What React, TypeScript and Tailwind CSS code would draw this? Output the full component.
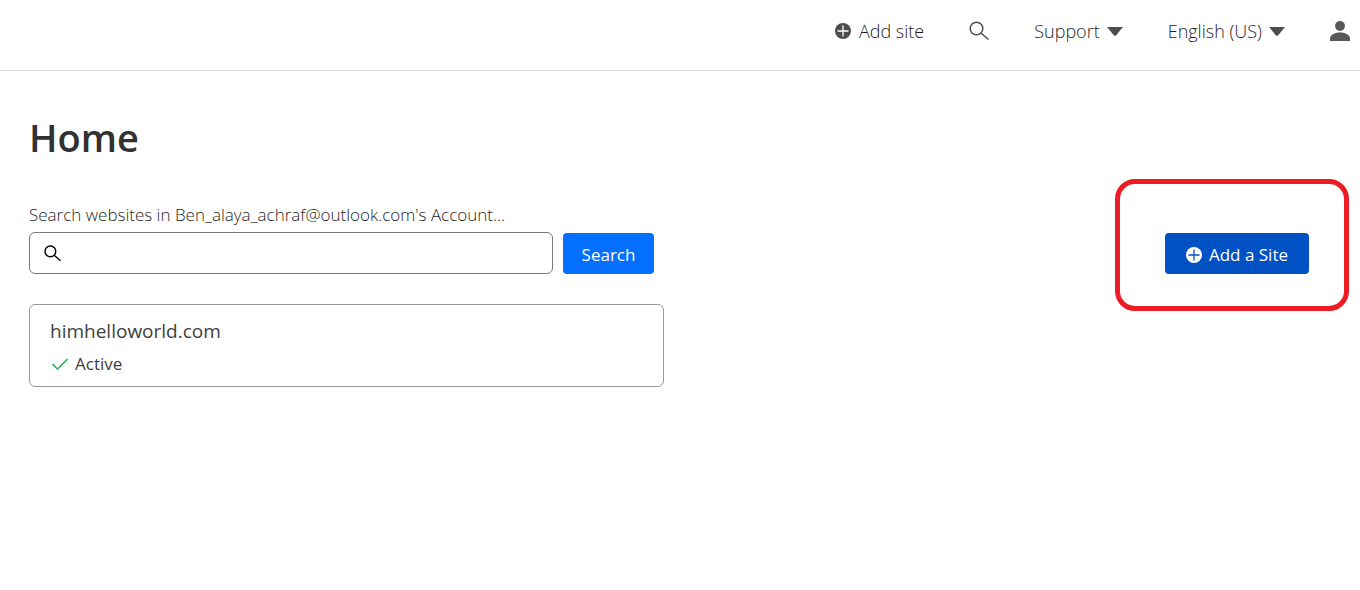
import React, { useState } from "react";

interface Site {
  name: string;
  status: string;
}

const sites: Site[] = [{ name: "himhelloworld.com", status: "Active" }];

const PlusCircle = ({ plus }: { plus: string }) => (
  <svg className="h-4 w-4 shrink-0" viewBox="0 0 16 16" aria-hidden="true">
    <circle cx="8" cy="8" r="8" fill="currentColor" />
    <path d="M8 2.5v11M2.5 8h11" stroke={plus} strokeWidth="1.3" />
  </svg>
);

const SearchIcon = ({ className }: { className: string }) => (
  <svg
    className={className}
    viewBox="0 0 20 20"
    fill="none"
    stroke="currentColor"
    aria-hidden="true"
  >
    <circle cx="7.5" cy="7.5" r="6.3" />
    <path d="M12 12l7.5 6.5" />
  </svg>
);

const Caret = () => (
  <svg
    className="h-[9px] w-4 shrink-0 text-[#4d4d4d]"
    viewBox="0 0 16 9"
    aria-hidden="true"
  >
    <path d="M0 0h16L9 8.4q-1 .9-2 0z" fill="currentColor" />
  </svg>
);

const Header: React.FC = () => (
  <header className="flex h-[71px] items-start justify-end gap-[45px] border-b border-[#d9d9d9] pt-[17px] pr-[10px] text-[18px] font-light text-[#1f1f1f]">
    <a href="#add" className="flex h-7 items-center gap-2">
      <span className="flex text-[#4d4d4d]">
        <PlusCircle plus="#fff" />
      </span>
      Add site
    </a>
    <button type="button" aria-label="Search" className="flex h-7 items-center">
      <SearchIcon className="h-5 w-5 stroke-[1.5] text-[#4d4d4d]" />
    </button>
    <button type="button" className="flex h-7 items-center gap-[7px]">
      Support
      <Caret />
    </button>
    <button type="button" className="flex h-7 items-center gap-[7px]">
      English (US)
      <Caret />
    </button>
    <button type="button" aria-label="Account" className="flex h-7 items-center">
      <svg className="h-5 w-5 text-[#595959]" viewBox="0 0 20 20" fill="currentColor">
        <circle cx="10" cy="5" r="5" />
        <path d="M0 20v-2c0-4 4-6.5 10-6.5S20 14 20 18v2z" />
      </svg>
    </button>
  </header>
);

const App: React.FC = () => {
  const [query, setQuery] = useState("");

  return (
    <div className="min-h-screen bg-white font-['Open_Sans','Noto_Sans',sans-serif] text-[17px] leading-7 text-[#404040]">
      <Header />
      <main className="pt-[41px] pr-[51px] pb-8 pl-[29px]">
        <h1 className="text-[38px] leading-[50px] font-semibold text-[#313131]">
          Home
        </h1>
        <div className="mt-[39px] flex items-end justify-between">
          <form onSubmit={(e) => e.preventDefault()}>
            <label
              htmlFor="site-search"
              className="block font-light text-[#1f1f1f]"
            >
              Search websites in Ben_alaya_achraf@outlook.com's Account...
            </label>
            <div className="mt-[3px] flex items-end gap-[10px]">
              <div className="flex h-[42px] w-[524px] items-center gap-2 rounded-md border border-[#797979] px-[14px]">
                <SearchIcon className="h-[17px] w-[17px] shrink-0 stroke-[1.7] text-black" />
                <input
                  id="site-search"
                  type="text"
                  value={query}
                  onChange={(e) => setQuery(e.target.value)}
                  className="min-w-0 flex-1 outline-none"
                />
              </div>
              <button
                type="submit"
                className="h-[41px] w-[91px] rounded bg-[#056fff] pt-[2px] text-white"
              >
                Search
              </button>
            </div>
          </form>
          <div className="relative">
            <button
              type="button"
              className="flex h-[41px] w-36 items-center justify-center gap-[7px] rounded bg-[#0051c3] pt-[2px] text-white"
            >
              <PlusCircle plus="#0051c3" />
              Add a Site
            </button>
            {/* highlight around the button */}
            <div className="pointer-events-none absolute -top-[54px] -right-10 -bottom-[37px] -left-[50px] rounded-[20px] border-5 border-[#ed1c24]" />
          </div>
        </div>
        <ul className="mt-[30px] max-w-[635px]">
          {sites.map((site) => (
            <li
              key={site.name}
              className="rounded-md border border-[#999999] px-5 pt-3 pb-2"
            >
              <a href="#site" className="block text-[19px] leading-7">
                {site.name}
              </a>
              <p className="mt-[5px] flex items-center gap-[7px]">
                <svg
                  className="ml-[2px] h-3 w-4"
                  viewBox="0 0 16 12"
                  fill="none"
                  stroke="#2db35e"
                  strokeWidth="1.6"
                  aria-hidden="true"
                >
                  <path d="M.5 6l5 5L15.5 1" />
                </svg>
                {site.status}
              </p>
            </li>
          ))}
        </ul>
      </main>
    </div>
  );
};

export default App;
